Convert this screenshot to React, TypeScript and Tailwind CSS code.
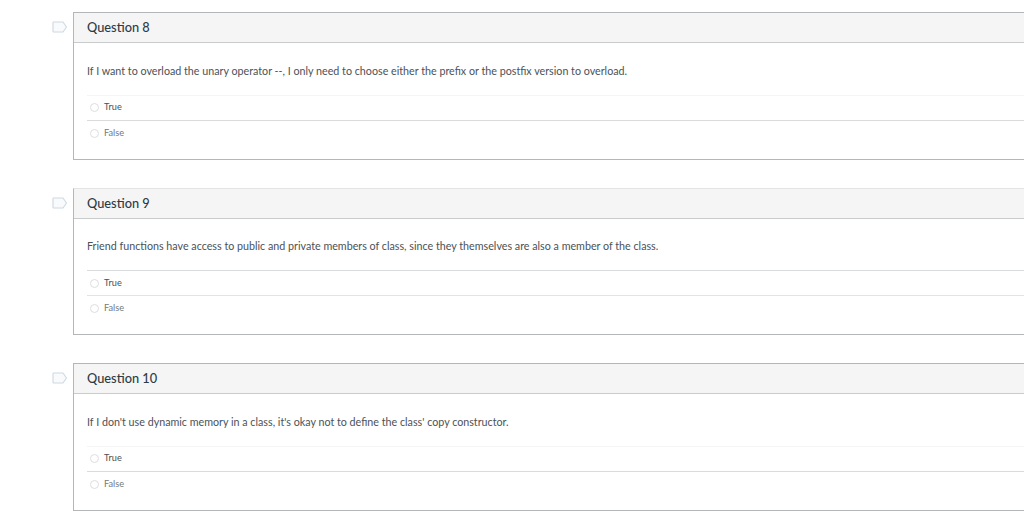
import React from 'react';

interface QuestionProps {
  title: string;
  text: string;
  className?: string;
  // Question 9 sits a pixel tighter in the screenshot and its dividers differ
  tight?: boolean;
}

function Flag(): React.ReactElement {
  return (
    <svg width="16" height="12" viewBox="0 0 16 12" fill="none" className="mt-[9px] shrink-0">
      <path
        d="M1.8 1h9.2l3.5 5-3.5 5H1.8a.8.8 0 0 1-.8-.8V1.8A.8.8 0 0 1 1.8 1z"
        fill="#f8fafc"
        stroke="#cdd8e2"
        strokeWidth="1.1"
        strokeLinejoin="round"
      />
    </svg>
  );
}

function Answer({ label, muted, raised }: { label: string; muted?: boolean; raised?: boolean }): React.ReactElement {
  return (
    <div className={`flex h-[24px] items-center ${raised ? 'pb-[2px]' : ''}`}>
      <span className="ml-[3px] h-[9px] w-[9px] rounded-full border border-[#dedede] bg-white" />
      <span className={`ml-[5px] text-[9.2px] ${muted ? 'text-[#74797d]' : 'text-[#4b5054]'}`}>{label}</span>
    </div>
  );
}

function Question({ title, text, className, tight }: QuestionProps): React.ReactElement {
  return (
    <div className={`flex ${className ?? ''}`}>
      <div className="flex w-[73px] shrink-0 justify-end pr-[5px]">
        <Flag />
      </div>
      <div
        className={`flex-1 border-y border-l border-b-[#b4b6b8] border-l-[#b4b6b8] bg-white ${
          tight ? 'h-[147px] border-t-[#e4e4e4]' : 'h-[148px] border-t-[#b4b6b8]'
        }`}
      >
        <div className="flex h-[30px] items-center border-b border-[#c9cccd] bg-[#f5f5f5] pl-[13px] text-[12.8px] font-medium text-[#2d3b45]">
          {title}
        </div>
        <div className="pl-[13px]">
          <p className={`text-[10.72px] leading-[16px] text-[#4b5257] ${tight ? 'pt-[19px]' : 'pt-[20px]'}`}>{text}</p>
          <div className={`mt-[16px] border-t ${tight ? 'border-[#d9dbdc]' : 'border-[#f5f5f5]'}`}>
            <Answer label="True" raised={!tight} />
          </div>
          <div className={`border-t ${tight ? 'border-[#e2e3e4]' : 'border-[#d9dbdc]'}`}>
            <Answer label="False" muted />
          </div>
        </div>
      </div>
    </div>
  );
}

export default function App(): React.ReactElement {
  return (
    <div className="h-[528px] w-[1024px] overflow-hidden bg-white pt-[12px] font-['Lato',sans-serif]">
      <Question
        title="Question 8"
        text="If I want to overload the unary operator --, I only need to choose either the prefix or the postfix version to overload."
      />
      <Question
        tight
        className="mt-[28px]"
        title="Question 9"
        text="Friend functions have access to public and private members of class, since they themselves are also a member of the class."
      />
      <Question
        className="mt-[28px]"
        title="Question 10"
        text="If I don't use dynamic memory in a class, it's okay not to define the class' copy constructor."
      />
    </div>
  );
}
